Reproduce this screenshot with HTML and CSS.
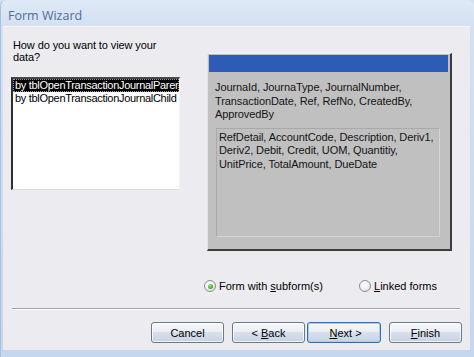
FILE: index.html
```html
<!DOCTYPE html>
<html>
<head>
<meta charset="utf-8">
<title>Form Wizard</title>
<link rel="stylesheet" href="styles.css">
</head>
<body>
<div class="window">
  <div class="titlebar"><span class="title">Form Wizard</span></div>
  <div class="client">
    <div class="main">
      <div class="left">
        <p class="prompt">How do you want to view your<br>data?</p>
        <div class="listbox">
          <div class="item selected">by tblOpenTransactionJournalParent</div>
          <div class="item">by tblOpenTransactionJournalChild</div>
        </div>
      </div>
      <div class="preview">
        <div class="preview-bar"></div>
        <div class="preview-fields">JournaId, JournaType, JournalNumber,<br>TransactionDate, Ref, RefNo, CreatedBy,<br>ApprovedBy</div>
        <div class="subform">RefDetail, AccountCode, Description, Deriv1,<br>Deriv2, Debit, Credit, UOM, Quantitiy,<br>UnitPrice, TotalAmount, DueDate</div>
      </div>
    </div>
    <div class="options">
      <label class="option option-first"><span class="radio checked"><span class="dot"></span></span><span>Form with <u>s</u>ubform(s)</span></label>
      <label class="option"><span class="radio"></span><span><u>L</u>inked forms</span></label>
    </div>
    <div class="separator"></div>
    <div class="buttons">
      <button class="btn">Cancel</button>
      <button class="btn btn-back">&lt; <u>B</u>ack</button>
      <button class="btn btn-next default">&nbsp;<u>N</u>ext &gt;</button>
      <button class="btn btn-finish"><u>F</u>inish</button>
    </div>
  </div>
</div>
</body>
</html>
```
FILE: styles.css
```css
html, body {
  margin: 0;
  padding: 0;
  background: #d6e0ec;
}

.window {
  width: 474px;
  height: 357px;
  box-sizing: border-box;
  background: linear-gradient(#dfe9f6 0px, #d3e1f2 26px, #c4d7ef 100%);
  border-left: 1px solid #a9c0e0;
  border-radius: 6px 6px 0 0;
  overflow: hidden;
  display: flex;
  flex-direction: column;
  font-family: "Liberation Sans", Arial, sans-serif;
  font-size: 11px;
  color: #000;
}

.titlebar {
  height: 26px;
  box-sizing: border-box;
  padding: 5px 0 0 7px;
  line-height: 22px;
}

.title {
  font-family: "Open Sans", "Liberation Sans", sans-serif;
  font-size: 12.5px;
  color: #4f6d98;
}

.client {
  margin: 0 4px 0 2px;
  height: 324px;
  background: #ecebef;
  display: flex;
  flex-direction: column;
  border-top: 1px solid #f6f7fa;
  box-sizing: border-box;
}

.main {
  display: flex;
  height: 224px;
}

.left {
  margin-left: 8px;
  width: 169px;
  display: flex;
  flex-direction: column;
}

.prompt {
  margin: 12px 0 0 2px;
  line-height: 12px;
  letter-spacing: -0.1px;
}

.listbox {
  margin-top: 14px;
  width: 169px;
  height: 113px;
  box-sizing: border-box;
  background: #fff;
  border-top: 2px solid #4a4a4a;
  border-left: 2px solid #2e2e2e;
  border-right: 1px solid #f4f4f4;
  border-bottom: 1px solid #dcdcdc;
  overflow: hidden;
}

.item {
  height: 13px;
  line-height: 13px;
  padding-left: 2px;
  white-space: nowrap;
  overflow: hidden;
  letter-spacing: -0.3px;
}

.item.selected {
  background: #000;
  color: #fff;
  outline: 1px dotted #9a9a9a;
  outline-offset: -1px;
}

.preview {
  margin: 26px 0 0 27px;
  width: 245px;
  height: 198px;
  box-sizing: border-box;
  background: #c0c0c0;
  border-top: 1px solid #f2f2f2;
  border-left: 1px solid #e4e4e4;
  border-right: 2px solid #3c3c3c;
  border-bottom: 2px solid #3c3c3c;
  padding: 1px 2px 0 1px;
  display: flex;
  flex-direction: column;
}

.preview-bar {
  height: 17px;
  background: #2c5cb5;
}

.preview-fields {
  margin: 9px 0 0 6px;
  line-height: 13.5px;
  color: #141414;
  letter-spacing: -0.1px;
}

.subform {
  margin: 6px 8px 0 7px;
  height: 109px;
  box-sizing: border-box;
  border-top: 1px solid #a9a9a9;
  border-left: 1px solid #a9a9a9;
  border-right: 1px solid #d4d4d4;
  border-bottom: 1px solid #d4d4d4;
  padding: 2px 0 0 2px;
  line-height: 13.5px;
  color: #141414;
  letter-spacing: -0.1px;
}

.options {
  margin-top: 28px;
  height: 14px;
  display: flex;
  align-items: center;
  padding-left: 201px;
}

.option {
  display: flex;
  align-items: center;
  gap: 3px;
}

.option-first {
  width: 155px;
}

.radio {
  width: 12px;
  height: 12px;
  box-sizing: border-box;
  border-radius: 50%;
  border: 1px solid #8a8d91;
  background: radial-gradient(circle at 40% 35%, #ffffff 0%, #eceef0 55%, #cfd2d6 100%);
  display: flex;
  align-items: center;
  justify-content: center;
}

.dot {
  width: 5px;
  height: 5px;
  border-radius: 50%;
  background: radial-gradient(circle at 40% 35%, #9fe87f 0%, #45b02a 60%, #2a7d1a 100%);
}

.separator {
  margin: 15px 10px 0 9px;
  border-top: 1px solid #a3a3a6;
  border-bottom: 1px solid #ffffff;
}

.buttons {
  margin-top: 12px;
  height: 21px;
  display: flex;
  justify-content: flex-end;
  padding-right: 8px;
}

.btn {
  width: 73px;
  height: 21px;
  box-sizing: border-box;
  padding: 0;
  font-family: "Liberation Sans", Arial, sans-serif;
  font-size: 11px;
  color: #000;
  border: 1px solid #707784;
  border-radius: 3px;
  background: linear-gradient(#f6f8fb 0%, #eaeef4 45%, #d8e0ec 50%, #c6d2e4 100%);
  box-shadow: inset 0 0 0 1px rgba(255, 255, 255, 0.75);
}

.btn-back {
  margin-left: 8px;
}

.btn-next {
  margin-left: 2px;
  width: 74px;
}

.btn-finish {
  margin-left: 8px;
}

.btn.default {
  border-color: #3a6aa8;
  box-shadow: inset 0 0 0 1px #a9cdef;
}

u {
  text-decoration: underline;
  text-underline-offset: 1px;
}
```
